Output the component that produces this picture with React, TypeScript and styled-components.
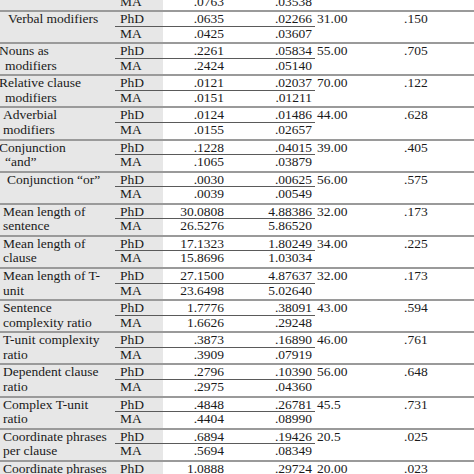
import styled, { createGlobalStyle } from 'styled-components';

const GlobalStyle = createGlobalStyle`
  * {
    box-sizing: border-box;
  }

  body {
    margin: 0;
    background: #fff;
    color: #1a1a1a;
    font-family: "Liberation Serif", "Times New Roman", serif;
    font-size: 13.5px;
  }
`;

const Page = styled.div`
  width: 474px;
  height: 474px;
  overflow: hidden;
  background: #fff;
`;

const Table = styled.div`
  margin-top: -5.5px;
`;

const GroupRow = styled.div<{ $open?: boolean; $partial?: boolean }>`
  display: grid;
  grid-template-columns: 115px 48px 67px 85px 86px 1fr;
  grid-template-rows: ${(p) => (p.$partial ? '15.5px' : '14.6px 15.54px')};
  border-top: ${(p) => (p.$open ? 'none' : '2px solid #9a9a9a')};
`;

const Label = styled.div<{ $span: number }>`
  grid-row: span ${(p) => p.$span};
  background: #e7e7e7;
  line-height: 14.6px;
  overflow: hidden;
`;

const LabelLine = styled.span<{ $indent: number }>`
  display: block;
  white-space: nowrap;
  margin-left: ${(p) => p.$indent}px;
`;

const Cell = styled.div<{ $rule?: boolean }>`
  line-height: 13px;
  white-space: nowrap;
  border-bottom: ${(p) => (p.$rule ? '1px solid #5a5a5a' : 'none')};
`;

const Level = styled(Cell)`
  background: #e7e7e7;
  padding-left: 5px;
`;

const Mean = styled(Cell)`
  text-align: right;
  padding-right: 6px;
`;

const Sd = styled(Cell)`
  text-align: right;
  padding-right: 3px;
`;

const Stat = styled(Cell)`
  padding-left: 2px;
`;

const Sig = styled(Cell)`
  padding-left: 3px;
`;

interface Row {
  level: 'PhD' | 'MA';
  mean: string;
  sd: string;
  stat?: string;
  sig?: string;
}

interface Group {
  label: [string, number][];
  rows: Row[];
}

const groups: Group[] = [
  { label: [], rows: [{ level: 'MA', mean: '.0763', sd: '.03538' }] },
  {
    label: [['Verbal modifiers', 8]],
    rows: [
      { level: 'PhD', mean: '.0635', sd: '.02266', stat: '31.00', sig: '.150' },
      { level: 'MA', mean: '.0425', sd: '.03607' },
    ],
  },
  {
    label: [['Nouns as', -1], ['modifiers', 5]],
    rows: [
      { level: 'PhD', mean: '.2261', sd: '.05834', stat: '55.00', sig: '.705' },
      { level: 'MA', mean: '.2424', sd: '.05140' },
    ],
  },
  {
    label: [['Relative clause', -1], ['modifiers', 5]],
    rows: [
      { level: 'PhD', mean: '.0121', sd: '.02037', stat: '70.00', sig: '.122' },
      { level: 'MA', mean: '.0151', sd: '.01211' },
    ],
  },
  {
    label: [['Adverbial', 3], ['modifiers', 3]],
    rows: [
      { level: 'PhD', mean: '.0124', sd: '.01486', stat: '44.00', sig: '.628' },
      { level: 'MA', mean: '.0155', sd: '.02657' },
    ],
  },
  {
    label: [['Conjunction', -1], ['\u201Cand\u201D', 5]],
    rows: [
      { level: 'PhD', mean: '.1228', sd: '.04015', stat: '39.00', sig: '.405' },
      { level: 'MA', mean: '.1065', sd: '.03879' },
    ],
  },
  {
    label: [['Conjunction \u201Cor\u201D', 7]],
    rows: [
      { level: 'PhD', mean: '.0030', sd: '.00625', stat: '56.00', sig: '.575' },
      { level: 'MA', mean: '.0039', sd: '.00549' },
    ],
  },
  {
    label: [['Mean length of', 3], ['sentence', 3]],
    rows: [
      { level: 'PhD', mean: '30.0808', sd: '4.88386', stat: '32.00', sig: '.173' },
      { level: 'MA', mean: '26.5276', sd: '5.86520' },
    ],
  },
  {
    label: [['Mean length of', 3], ['clause', 3]],
    rows: [
      { level: 'PhD', mean: '17.1323', sd: '1.80249', stat: '34.00', sig: '.225' },
      { level: 'MA', mean: '15.8696', sd: '1.03034' },
    ],
  },
  {
    label: [['Mean length of T-', 3], ['unit', 3]],
    rows: [
      { level: 'PhD', mean: '27.1500', sd: '4.87637', stat: '32.00', sig: '.173' },
      { level: 'MA', mean: '23.6498', sd: '5.02640' },
    ],
  },
  {
    label: [['Sentence', 3], ['complexity ratio', 3]],
    rows: [
      { level: 'PhD', mean: '1.7776', sd: '.38091', stat: '43.00', sig: '.594' },
      { level: 'MA', mean: '1.6626', sd: '.29248' },
    ],
  },
  {
    label: [['T-unit complexity', 3], ['ratio', 3]],
    rows: [
      { level: 'PhD', mean: '.3873', sd: '.16890', stat: '46.00', sig: '.761' },
      { level: 'MA', mean: '.3909', sd: '.07919' },
    ],
  },
  {
    label: [['Dependent clause', 3], ['ratio', 3]],
    rows: [
      { level: 'PhD', mean: '.2796', sd: '.10390', stat: '56.00', sig: '.648' },
      { level: 'MA', mean: '.2975', sd: '.04360' },
    ],
  },
  {
    label: [['Complex T-unit', 3], ['ratio', 3]],
    rows: [
      { level: 'PhD', mean: '.4848', sd: '.26781', stat: '45.5', sig: '.731' },
      { level: 'MA', mean: '.4404', sd: '.08990' },
    ],
  },
  {
    label: [['Coordinate phrases', 3], ['per clause', 3]],
    rows: [
      { level: 'PhD', mean: '.6894', sd: '.19426', stat: '20.5', sig: '.025' },
      { level: 'MA', mean: '.5694', sd: '.08349' },
    ],
  },
  {
    label: [['Coordinate phrases', 3]],
    rows: [
      { level: 'PhD', mean: '1.0888', sd: '.29724', stat: '20.00', sig: '.023' },
    ],
  },
];

const App = () => (
  <Page>
    <GlobalStyle />
    <Table>
      {groups.map((group, gi) => {
        const partial = gi === 0;
        return (
          <GroupRow key={gi} $open={partial} $partial={partial}>
            <Label $span={partial ? 1 : 2}>
              {group.label.map(([text, indent]) => (
                <LabelLine key={text} $indent={indent}>{text}</LabelLine>
              ))}
            </Label>
            {group.rows.map((row) => {
              const rule = row.level === 'PhD';
              return [
                <Level key={`${row.level}-l`} $rule={rule}>{row.level}</Level>,
                <Mean key={`${row.level}-m`} $rule={rule}>{row.mean}</Mean>,
                <Sd key={`${row.level}-s`} $rule={rule}>{row.sd}</Sd>,
                <Stat key={`${row.level}-t`}>{row.stat}</Stat>,
                <Sig key={`${row.level}-p`}>{row.sig}</Sig>,
              ];
            })}
          </GroupRow>
        );
      })}
    </Table>
  </Page>
);

export default App;
